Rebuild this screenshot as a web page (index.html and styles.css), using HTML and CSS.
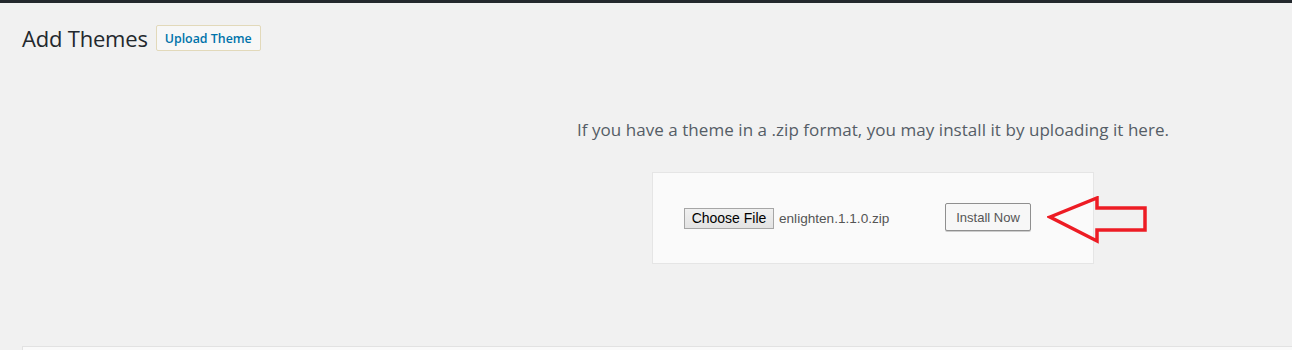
FILE: index.html
```html
<!DOCTYPE html>
<html>
<head>
<meta charset="utf-8">
<link rel="stylesheet" href="styles.css">
</head>
<body>
<div class="adminbar"></div>
<div class="wrap">
  <div class="title-row">
    <h1 class="title">Add Themes</h1>
    <button class="title-action">Upload Theme</button>
  </div>
  <div class="upload-section">
    <p class="install-help">If you have a theme in a .zip format, you may install it by uploading it here.</p>
    <div class="upload-box">
      <div class="file-field">
        <button class="choose-btn">Choose File</button>
        <span class="file-name">enlighten.1.1.0.zip</span>
      </div>
      <button class="install-btn">Install Now</button>
      <svg class="arrow" width="104" height="50" viewBox="0 0 104 50">
        <path d="M3 21 L50 2 L50 12 L98 12 L98 34 L50 34 L50 45 Z" fill="none" stroke="#ed1c24" stroke-width="3.5" stroke-linejoin="miter"/>
      </svg>
    </div>
  </div>
  <div class="bottom-box"></div>
</div>
</body>
</html>
```
FILE: styles.css
```css
html, body {
  margin: 0;
  padding: 0;
  background: #f1f1f1;
  overflow: hidden;
}
body {
  font-family: "Segoe UI", "Open Sans", "Noto Sans", sans-serif;
  height: 350px;
}
.adminbar {
  height: 3px;
  background: #23282d;
}
.wrap {
  padding-left: 22px;
}
.title-row {
  display: flex;
  align-items: center;
  padding-top: 20px;
  gap: 8px;
}
.title {
  margin: 0;
  font-family: "Open Sans", sans-serif;
  font-weight: 400;
  font-size: 22px;
  line-height: 30px;
  color: #23282d;
  letter-spacing: -0.2px;
}
.title-action {
  font-family: "Open Sans", sans-serif;
  font-weight: 600;
  font-size: 12.4px;
  color: #0073aa;
  background: #f7f7f7;
  border: 1px solid #e2d9ba;
  border-radius: 2px;
  height: 26px;
  padding: 0 8px;
  margin-top: 0;
}
.upload-section {
  margin-left: 541px;
  width: 620px;
  display: flex;
  flex-direction: column;
  align-items: center;
  padding-top: 64px;
}
.install-help {
  margin: 0;
  font-family: "Open Sans", sans-serif;
  font-size: 17px;
  line-height: 26px;
  color: #555d66;
  letter-spacing: 0.05px;
  white-space: nowrap;
}
.upload-box {
  position: relative;
  margin-top: 29px;
  width: 442px;
  height: 92px;
  box-sizing: border-box;
  background: #fafafa;
  border: 1px solid #e5e5e5;
  display: flex;
  align-items: center;
  padding-left: 31px;
}
.file-field {
  display: flex;
  align-items: center;
  gap: 5px;
  width: 260px;
}
.choose-btn {
  font-family: "Liberation Sans", Arial, sans-serif;
  font-size: 14px;
  color: #000;
  background: linear-gradient(#f0f0f0, #e3e3e3);
  border: 1px solid #a6a6a6;
  border-radius: 0;
  height: 21px;
  width: 90px;
  padding: 0;
  line-height: 19px;
}
.file-name {
  font-family: "Liberation Sans", Arial, sans-serif;
  font-size: 13.6px;
  color: #555;
}
.install-btn {
  font-family: "Liberation Sans", Arial, sans-serif;
  font-size: 13px;
  color: #555;
  background: #f7f7f7;
  border: 1px solid #8f8f8f;
  border-radius: 2px;
  box-shadow: 0 1px 0 #ccc;
  height: 28px;
  width: 86px;
  padding: 0;
  margin-top: -2px;
  margin-left: 1px;
}
.arrow {
  position: absolute;
  left: 394px;
  top: 23px;
}
.bottom-box {
  margin-top: 82px;
  height: 20px;
  background: #fafafa;
  border-top: 1px solid #e2e2e2;
  border-left: 1px solid #e2e2e2;
}
```
